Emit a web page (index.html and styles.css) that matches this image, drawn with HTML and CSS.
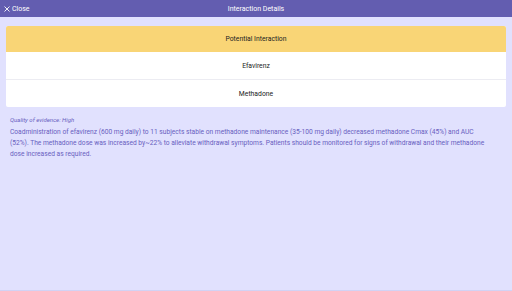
FILE: index.html
```html
<!DOCTYPE html>
<html lang="en">
<head>
<meta charset="UTF-8">
<meta name="viewport" content="width=device-width, initial-scale=1.0">
<title>Interaction Details</title>
<link rel="stylesheet" href="styles.css">
</head>
<body>

<!-- Top bar -->
<div class="topbar">
    <div class="close">
        <svg class="close-icon" width="6" height="6" viewBox="0 0 6 6">
            <path d="M0.5 0.5 L5.5 5.5 M5.5 0.5 L0.5 5.5" stroke="#ffffff" stroke-width="0.9" fill="none"/>
        </svg>
        <span>Close</span>
    </div>
    <div class="title">Interaction Details</div>
    <div class="spacer"></div>
</div>

<div class="content">
    <div class="card">
        <div class="row row-status">Potential Interaction</div>
        <div class="row">Efavirenz</div>
        <div class="row">Methadone</div>
    </div>

    <div class="summary">
        <p class="quality">Quality of evidence: High</p>
        <p class="text">Coadministration of efavirenz (600 mg daily) to 11 subjects stable on methadone maintenance (35-100 mg daily) decreased methadone Cmax (45%) and AUC (52%). The methadone dose was increased by~22% to alleviate withdrawal symptoms. Patients should be monitored for signs of withdrawal and their methadone dose increased as required.</p>
    </div>
</div>

</body>
</html>
```

FILE: styles.css
```css
html, body {
    height: 100%;
}

body {
    margin: 0;
    background-color: #e1e1fe;
    font-family: Roboto, "Noto Sans", sans-serif;
    display: flex;
    flex-direction: column;
}

.topbar {
    height: 17px;
    background-color: #635db0;
    color: #ffffff;
    font-size: 7px;
    display: flex;
    align-items: center;
    padding: 0 4px;
    flex-shrink: 0;
}

.close {
    width: 60px;
    display: flex;
    align-items: center;
    gap: 2px;
}

.close-icon {
    display: block;
}

.title {
    flex: 1;
    text-align: center;
}

.spacer {
    width: 60px;
}

.content {
    flex: 1;
    padding: 9px 6px 0;
    border-bottom: 1px solid #d2d2f4;
}

.card {
    background-color: #ffffff;
    border-radius: 2px;
    overflow: hidden;
}

.row {
    height: 27px;
    display: flex;
    align-items: center;
    justify-content: center;
    font-size: 6.8px;
    color: #222222;
}

.row + .row {
    border-top: 1px solid #ececf2;
}

.row-status {
    height: 26px;
    background-color: #f9d576;
}

.row-status + .row {
    border-top: none;
}

.summary {
    padding: 8px 16px 0 4px;
    color: #6860c0;
}

.summary p {
    margin: 0;
}

.quality {
    font-size: 6px;
    font-style: italic;
    line-height: 9px;
}

.text {
    margin-top: 3px !important;
    font-size: 6.65px;
    line-height: 11px;
}
```
